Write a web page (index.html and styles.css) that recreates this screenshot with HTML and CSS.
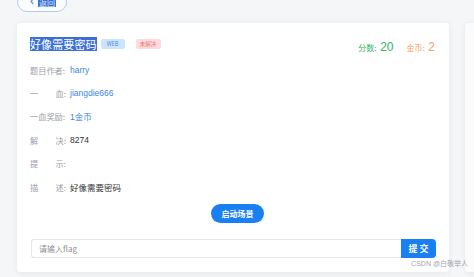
FILE: index.html
```html
<!DOCTYPE html>
<html>
<head>
<meta charset="utf-8">
<link rel="stylesheet" href="styles.css">
</head>
<body>
<div class="page">
  <div class="back"><span class="chev">&lsaquo;</span><span class="sel">返回</span></div>
  <div class="cards">
    <div class="card">
      <div class="head">
        <div class="title-wrap">
          <span class="title sel">好像需要密码</span>
          <span class="tag tag-web">WEB</span>
          <span class="tag tag-un">未解决</span>
        </div>
        <div class="scores">
          <span class="score green"><span class="k">分数:</span> <span class="v">20</span></span>
          <span class="score orange"><span class="k">金币:</span> <span class="v">2</span></span>
        </div>
      </div>
      <div class="rows">
        <div class="row"><span class="lbl">题目作者:</span><span class="val link">harry</span></div>
        <div class="row"><span class="lbl sp"><i>一</i><i>血:</i></span><span class="val link">jiangdie666</span></div>
        <div class="row"><span class="lbl">一血奖励:</span><span class="val link">1金币</span></div>
        <div class="row"><span class="lbl sp"><i>解</i><i>决:</i></span><span class="val">8274</span></div>
        <div class="row"><span class="lbl sp"><i>提</i><i>示:</i></span><span class="val"></span></div>
        <div class="row"><span class="lbl sp"><i>描</i><i>述:</i></span><span class="val">好像需要密码</span></div>
      </div>
      <div class="start-wrap"><button class="start">启动场景</button></div>
      <div class="submit-row">
        <div class="input">请输入flag</div>
        <button class="submit">提 交</button>
      </div>
    </div>
    <div class="card card2"></div>
  </div>
  <div class="mark">CSDN @白敬举人</div>
</div>
</body>
</html>
```
FILE: styles.css
```css
html, body {
  margin: 0;
  padding: 0;
  width: 474px;
  height: 277px;
  overflow: hidden;
  background: #f5f6f8;
  font-family: "Liberation Sans", "Noto Sans CJK SC", sans-serif;
}
.page {
  position: relative;
  height: 277px;
  padding-left: 17px;
}
.back {
  margin-top: -8px;
  width: 50px;
  height: 20px;
  border: 1px solid #b3cbea;
  border-radius: 11px;
  background: #fbfcfe;
  display: flex;
  align-items: center;
  padding-left: 12px;
  box-sizing: border-box;
  gap: 4px;
  font-size: 8px;
  color: #2f6fd0;
}
.chev {
  font-size: 12px;
  line-height: 1;
  color: #4a7cc6;
  margin-top: -2px;
}
.sel {
  background: #3a70d4;
  color: #dfe9fb;
}
.back .sel {
  font-family: "Noto Sans CJK SC", sans-serif;
  line-height: 9px;
  padding: 0 1px;
}
.cards {
  display: flex;
  gap: 16px;
  margin-top: 11px;
}
.card {
  flex: 0 0 432px;
  height: 249px;
  box-sizing: border-box;
  background: #fff;
  border-radius: 3px;
  box-shadow: 0 1px 6px rgba(0, 0, 0, 0.07);
  padding: 14px 13px 0 13px;
}
.card2 {
  flex: 0 0 300px;
  background: #fbfbfc;
}
.head {
  display: flex;
  justify-content: space-between;
  align-items: center;
  height: 14px;
}
.title-wrap {
  display: flex;
  align-items: center;
  gap: 4px;
}
.title {
  font-family: "Noto Sans CJK SC", sans-serif;
  font-size: 11px;
  line-height: 14px;
  color: #fff;
  letter-spacing: 0.1px;
}
.tag {
  height: 10px;
  line-height: 10px;
  border-radius: 2px;
  font-size: 5.5px;
  text-align: center;
  font-family: "Noto Sans CJK SC", sans-serif;
}
.tag-web {
  width: 24px;
  background: #cde4fd;
  color: #4f8fe0;
}
.tag-un {
  width: 25px;
  margin-left: 7px;
  background: #fcdcdc;
  color: #ec7a7a;
}
.scores {
  display: flex;
  align-items: baseline;
  gap: 13px;
  padding-right: 1px;
}
.score {
  font-family: "Noto Sans CJK SC", sans-serif;
}
.score .k {
  font-size: 8px;
}
.score .v {
  font-family: "Liberation Sans", sans-serif;
  font-size: 12px;
}
.green { color: #2fb363; }
.orange { color: #f5a15e; }
.rows {
  margin-top: 7px;
  display: flex;
  flex-direction: column;
}
.row {
  height: 23.4px;
  display: flex;
  align-items: center;
  font-size: 8.5px;
}
.lbl {
  width: 40px;
  color: #9a9ea6;
  font-family: "Noto Sans CJK SC", sans-serif;
  font-size: 8.2px;
}
.lbl.sp {
  display: flex;
  justify-content: space-between;
  width: 36px;
  margin-right: 4px;
}
.lbl.sp i {
  font-style: normal;
}
.val {
  color: #333;
  font-size: 8.5px;
  font-family: "Liberation Sans", "Noto Sans CJK SC", sans-serif;
}
.val.link {
  color: #3b87e6;
}
.start-wrap {
  display: flex;
  justify-content: center;
  margin-top: 6px;
}
.start {
  width: 53px;
  height: 19px;
  border: none;
  border-radius: 10px;
  background: #1a7ff2;
  color: #fff;
  font-family: "Noto Sans CJK SC", sans-serif;
  font-size: 8px;
  font-weight: bold;
  padding: 0;
  margin-left: 9px;
}
.submit-row {
  display: flex;
  margin-top: 16px;
  margin-left: 1px;
}
.input {
  flex: 1;
  height: 19px;
  box-sizing: border-box;
  border: 1px solid #e6e8ec;
  border-right: none;
  border-radius: 3px 0 0 3px;
  font-size: 8px;
  color: #8c9096;
  padding-left: 7px;
  line-height: 17px;
  font-family: "Noto Sans CJK SC", sans-serif;
}
.submit {
  width: 35px;
  height: 19px;
  border: none;
  border-radius: 0 4px 4px 0;
  background: #1a7ff2;
  color: #fff;
  font-family: "Noto Sans CJK SC", sans-serif;
  font-size: 9px;
  font-weight: bold;
  padding: 0;
}
.mark {
  position: absolute;
  right: 6px;
  top: 266px;
  font-size: 7px;
  color: #a3a6ab;
  font-family: "Liberation Sans", "Noto Sans CJK SC", sans-serif;
}
```
